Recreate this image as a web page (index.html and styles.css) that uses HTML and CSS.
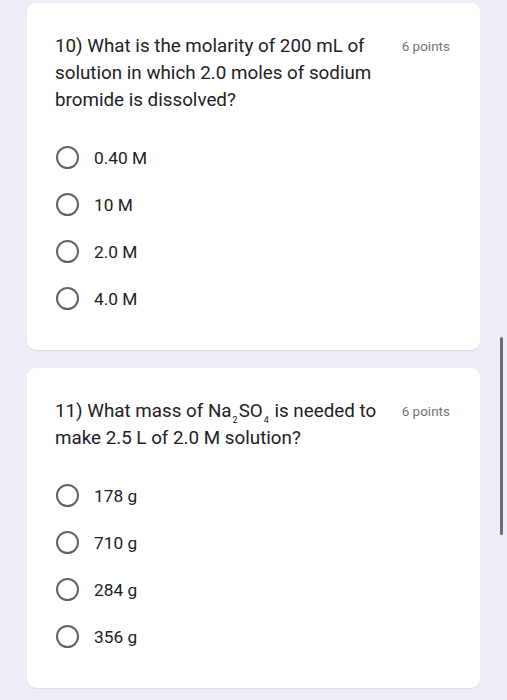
FILE: index.html
```html
<!DOCTYPE html>
<html>
<head>
<meta charset="utf-8">
<link rel="stylesheet" href="styles.css">
</head>
<body>
<main class="page">
  <section class="card card-first">
    <div class="head">
      <div class="question">10) What is the molarity of 200 mL of solution in which 2.0 moles of sodium bromide is dissolved?</div>
      <div class="points">6 points</div>
    </div>
    <ul class="options">
      <li class="option"><span class="radio"></span><span class="label">0.40 M</span></li>
      <li class="option"><span class="radio"></span><span class="label">10 M</span></li>
      <li class="option"><span class="radio"></span><span class="label">2.0 M</span></li>
      <li class="option"><span class="radio"></span><span class="label">4.0 M</span></li>
    </ul>
  </section>
  <section class="card">
    <div class="head">
      <div class="question">11) What mass of Na<sub>2</sub>SO<sub>4</sub> is needed to make 2.5 L of 2.0 M solution?</div>
      <div class="points">6 points</div>
    </div>
    <ul class="options">
      <li class="option"><span class="radio"></span><span class="label">178 g</span></li>
      <li class="option"><span class="radio"></span><span class="label">710 g</span></li>
      <li class="option"><span class="radio"></span><span class="label">284 g</span></li>
      <li class="option"><span class="radio"></span><span class="label">356 g</span></li>
    </ul>
  </section>
</main>
<div class="scrollbar"></div>
</body>
</html>
```
FILE: styles.css
```css
html, body {
  margin: 0;
  padding: 0;
  background: #f0ecf7;
  font-family: Roboto, "Liberation Sans", sans-serif;
  color: #202124;
}
.page {
  padding: 3px 27px 12px 27px;
  display: flex;
  flex-direction: column;
  gap: 18px;
}
.card {
  background: #ffffff;
  border-radius: 9px;
  box-shadow: 0 1px 1px rgba(0,0,0,0.08);
  padding: 30px 30px 28px 28px;
  display: flex;
  flex-direction: column;
  gap: 20px;
}
.head {
  display: flex;
  justify-content: space-between;
  align-items: flex-start;
}
.question {
  width: 335px;
  font-size: 18.8px;
  line-height: 27px;
}
.question sub {
  display: inline-block;
  font-size: 9px;
  line-height: 9px;
  vertical-align: -6px;
  margin: 0 1px 0 1px;
}
.points {
  font-size: 13.5px;
  line-height: 27px;
  color: #70757a;
}
.options {
  list-style: none;
  margin: 0;
  padding: 0;
  display: flex;
  flex-direction: column;
}
.option {
  height: 47px;
  display: flex;
  align-items: center;
  gap: 15px;
}
.radio {
  width: 19px;
  height: 19px;
  border: 2px solid #5f6368;
  border-radius: 50%;
  margin-left: 1px;
  flex: none;
}
.label {
  font-size: 17.3px;
}
.scrollbar {
  position: fixed;
  right: 4px;
  top: 337px;
  width: 3px;
  height: 198px;
  border-radius: 2px;
  background: #6e6a74;
}
```
